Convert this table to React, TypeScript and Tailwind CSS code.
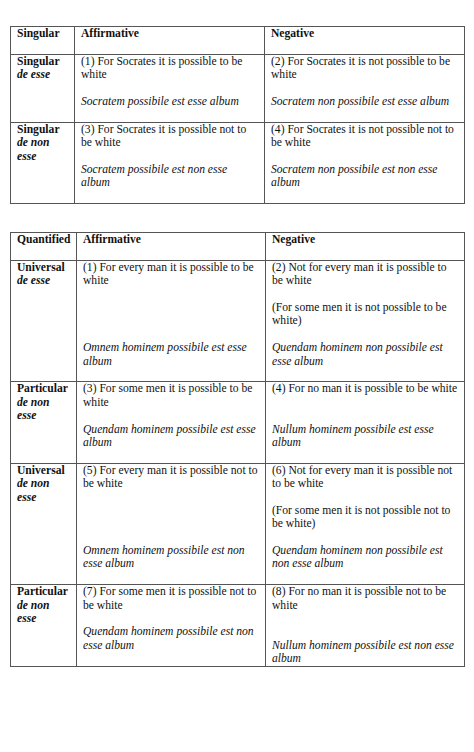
type Line = { t: string; b?: boolean; i?: boolean };
type Row = Line[][];

const L = (t: string): Line => ({ t });
const I = (t: string): Line => ({ t, i: true });
const B = (t: string): Line => ({ t, b: true });
const BI = (t: string): Line => ({ t, b: true, i: true });
const E: Line = { t: "" };

const singular: Row[] = [
  [
    [B("Singular"), E],
    [B("Affirmative"), E],
    [B("Negative"), E],
  ],
  [
    [B("Singular"), BI("de esse")],
    [L("(1) For Socrates it is possible to be"), L("white"), E, I("Socratem possibile est esse album"), E],
    [L("(2) For Socrates it is not possible to be"), L("white"), E, I("Socratem non possibile est esse album"), E],
  ],
  [
    [B("Singular"), BI("de non"), BI("esse")],
    [L("(3) For Socrates it is possible not to"), L("be white"), E, I("Socratem possibile est non esse"), I("album"), E],
    [L("(4) For Socrates it is not possible not to"), L("be white"), E, I("Socratem non possibile est non esse"), I("album"), E],
  ],
];

const quantified: Row[] = [
  [
    [B("Quantified"), E],
    [B("Affirmative"), E],
    [B("Negative"), E],
  ],
  [
    [B("Universal"), BI("de esse")],
    [L("(1) For every man it is possible to be"), L("white"), E, E, E, E, I("Omnem hominem possibile est esse"), I("album"), E],
    [
      L("(2) Not for every man it is possible to"),
      L("be white"),
      E,
      L("(For some men it is not possible to be"),
      L("white)"),
      E,
      I("Quendam hominem non possibile est"),
      I("esse album"),
      E,
    ],
  ],
  [
    [B("Particular"), BI("de non"), BI("esse")],
    [L("(3) For some men it is possible to be"), L("white"), E, I("Quendam hominem possibile est esse"), I("album"), E],
    [L("(4) For no man it is possible to be white"), E, E, I("Nullum hominem possibile est esse"), I("album"), E],
  ],
  [
    [B("Universal"), BI("de non"), BI("esse")],
    [L("(5) For every man it is possible not to"), L("be white"), E, E, E, E, I("Omnem hominem possibile est non"), I("esse album"), E],
    [
      L("(6) Not for every man it is possible not"),
      L("to be white"),
      E,
      L("(For some men it is not possible not to"),
      L("be white)"),
      E,
      I("Quendam hominem non possibile est"),
      I("non esse album"),
      E,
    ],
  ],
  [
    [B("Particular"), BI("de non"), BI("esse")],
    [L("(7) For some men it is possible not to"), L("be white"), E, I("Quendam hominem possibile est non"), I("esse album"), E],
    [L("(8) For no man it is possible not to be"), L("white"), E, E, I("Nullum hominem possibile est non esse"), I("album")],
  ],
];

function Cell({ lines }: { lines: Line[] }) {
  return (
    <td className="border border-[#555] pl-[6px] pr-[4px] py-0 align-top">
      {lines.map((l, k) => (
        <div
          key={k}
          className={`whitespace-nowrap h-[13.4px] ${l.b ? "font-bold" : ""} ${l.i ? "italic" : ""}`}
        >
          {l.t || "\u00a0"}
        </div>
      ))}
    </td>
  );
}

function Table({ rows, widths }: { rows: Row[]; widths: number[] }) {
  return (
    <table className="table-fixed border-collapse w-[454px]">
      <colgroup>
        {widths.map((w, k) => (
          <col key={k} style={{ width: w }} />
        ))}
      </colgroup>
      <tbody>
        {rows.map((r, k) => (
          <tr key={k}>
            {r.map((c, j) => (
              <Cell key={j} lines={c} />
            ))}
          </tr>
        ))}
      </tbody>
    </table>
  );
}

export default function App() {
  return (
    <div className="w-[474px] h-[752px] bg-white text-[#111] pt-[26px] pl-[10px] font-['Liberation_Serif','Times_New_Roman',serif] text-[11.6px] leading-[13.4px]">
      <Table rows={singular} widths={[64, 190, 200]} />
      <div className="h-[28px]" />
      <Table rows={quantified} widths={[66, 189, 199]} />
    </div>
  );
}
